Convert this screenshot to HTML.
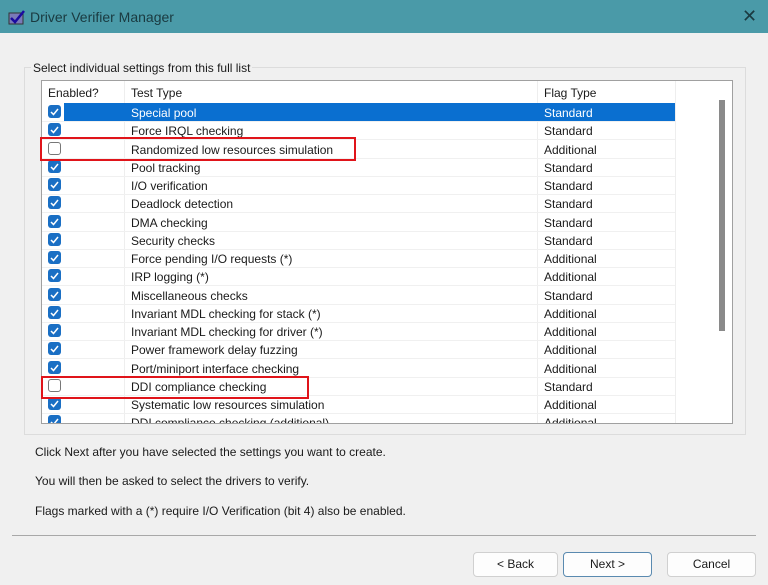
<!DOCTYPE html><html><head><style>
body{margin:0;width:768px;height:585px;background:#f0f0f0;font-family:"Liberation Sans",sans-serif;font-size:12px;color:#1a1a1a;position:relative;overflow:hidden}
.a{position:absolute}
.title{left:0;top:0;width:768px;height:33px;background:#4a9aa8}
.row{position:absolute;left:0;height:18px;width:633px;border-bottom:1px solid #f0f0f0}
.cb{position:absolute;left:6px;top:2px;width:13px;height:13px;border-radius:3px;background:#1a6fc4}
.cb.off{background:#fff;border:1px solid #777;width:11px;height:11px}
.cb svg{position:absolute;left:1px;top:1px}
.t{position:absolute;left:89px;top:3px}
.f{position:absolute;left:502px;top:3px}
.btn{position:absolute;top:552px;height:23px;background:#fdfdfd;border:1px solid #d0d0d0;border-radius:4px;text-align:center;line-height:23px;font-size:12px}
</style></head><body>
<div class="a title"></div>
<svg class="a" style="left:8px;top:10px" width="18" height="15"><rect x="1" y="3" width="14" height="11" fill="#7a7ab8" stroke="#333"/><path d="M3 8l4 4 9-11" stroke="#1a0aa0" stroke-width="2.5" fill="none"/></svg>
<div class="a" style="left:30px;top:9px;font-size:14px;color:#1a3a40">Driver Verifier Manager</div>
<div class="a" style="left:742px;top:6px;font-size:18px;color:#1a3a40">✕</div>
<div class="a" style="left:24px;top:67px;width:720px;height:366px;border:1px solid #dcdcdc"></div>
<div class="a" style="left:31px;top:61px;background:#f0f0f0;padding:0 2px">Select individual settings from this full list</div>
<div class="a" style="left:41px;top:80px;width:690px;height:342px;border:1px solid #a0a0a0;background:#fff;overflow:hidden">
<div class="a" style="left:82px;top:0;width:1px;height:342px;background:#eee"></div>
<div class="a" style="left:495px;top:0;width:1px;height:342px;background:#eee"></div>
<div class="a" style="left:633px;top:0;width:1px;height:342px;background:#eee"></div>
<div class="a" style="left:6px;top:5px">Enabled?</div><div class="a" style="left:89px;top:5px">Test Type</div><div class="a" style="left:502px;top:5px">Flag Type</div>
<div class="a" style="left:677px;top:19px;width:6px;height:231px;background:#8a8a8a"></div>
<div style="position:absolute;left:0;top:22px" id="rows">
<div class="row" style="top:0"><div class="a" style="left:22px;top:0;width:611px;height:18px;background:#0a6fd0"></div><div class="cb"><svg width="11" height="11"><path d="M2 6l2.5 2.5L9 3" stroke="#fff" stroke-width="1.5" fill="none"/></svg></div><div class="t" style="color:#fff">Special pool</div><div class="f" style="color:#fff">Standard</div></div>
</div>
</div>
<div class="a" style="left:40px;top:137px;width:312px;height:20px;border:2px solid #e0141a"></div>
<div class="a" style="left:41px;top:376px;width:264px;height:19px;border:2px solid #e0141a"></div>
<div class="a" style="left:35px;top:445px">Click Next after you have selected the settings you want to create.</div>
<div class="a" style="left:35px;top:474px">You will then be asked to select the drivers to verify.</div>
<div class="a" style="left:35px;top:504px">Flags marked with a (*) require I/O Verification (bit 4) also be enabled.</div>
<div class="a" style="left:12px;top:535px;width:744px;height:1px;background:#a8a8a8"></div>
<div class="btn" style="left:473px;width:83px">&lt; Back</div>
<div class="btn" style="left:563px;width:87px;border-color:#5a8ab0">Next &gt;</div>
<div class="btn" style="left:667px;width:87px">Cancel</div>
<script>
var d=[["Force IRQL checking","Standard",1],["Randomized low resources simulation","Additional",0],["Pool tracking","Standard",1],["I/O verification","Standard",1],["Deadlock detection","Standard",1],["DMA checking","Standard",1],["Security checks","Standard",1],["Force pending I/O requests (*)","Additional",1],["IRP logging (*)","Additional",1],["Miscellaneous checks","Standard",1],["Invariant MDL checking for stack (*)","Additional",1],["Invariant MDL checking for driver (*)","Additional",1],["Power framework delay fuzzing","Additional",1],["Port/miniport interface checking","Additional",1],["DDI compliance checking","Standard",0],["Systematic low resources simulation","Additional",1],["DDI compliance checking (additional)","Additional",1]];
var h="";d.forEach(function(r,i){h+='<div class="row" style="top:'+((i+1)*18.25)+'px"><div class="cb'+(r[2]?'':' off')+'">'+(r[2]?'<svg width="11" height="11"><path d="M2 6l2.5 2.5L9 3" stroke="#fff" stroke-width="1.5" fill="none"/></svg>':'')+'</div><div class="t">'+r[0]+'</div><div class="f">'+r[1]+'</div></div>';});
document.getElementById("rows").insertAdjacentHTML("beforeend",h);
</script>
</body></html>
